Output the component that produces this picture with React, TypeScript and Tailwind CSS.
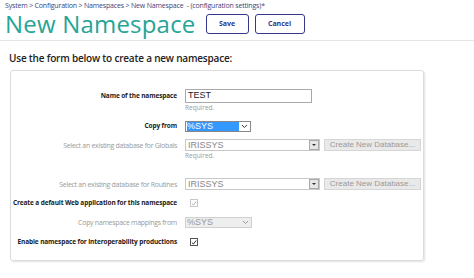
import React from "react";

const labelBold = "font-bold text-[#1a1a1a] text-[6.5px] tracking-[-0.12px]";
const labelDim = "text-[#9a9a9a] text-[7px] tracking-[-0.3px]";

function Row({ label, bold, className, children }: { label: string; bold?: boolean; className?: string; children?: React.ReactNode }) {
  return (
    <div className={`flex items-center ${className ?? ""}`}>
      <div className={`w-[166px] shrink-0 text-right whitespace-nowrap leading-none ${bold ? labelBold : labelDim}`}>{label}</div>
      <div className="ml-[8px] flex items-center">{children}</div>
    </div>
  );
}

function Check({ disabled }: { disabled?: boolean }) {
  return (
    <div className={`ml-[5px] w-[8px] h-[8px] border ${disabled ? "border-[#c8c8c8]" : "border-[#555]"} bg-white flex items-center justify-center`}>
      <svg width="7" height="7" viewBox="0 0 7 7">
        <path d="M1 3.5 L2.8 5.3 L6 1.2" fill="none" stroke={disabled ? "#aaa" : "#222"} strokeWidth="1.1" />
      </svg>
    </div>
  );
}

function Combo({ value }: { value: string }) {
  return (
    <div className="flex items-center gap-[4px]">
      <div className="flex items-center w-[135px] h-[12px] border border-[#c8c8c8] bg-white">
        <span className="flex-1 pl-[2px] text-[9px] leading-none text-[#888] font-['Liberation_Sans',sans-serif]">{value}</span>
        <div className="w-[10px] h-[10px] bg-[#e6e6e6] border border-[#aaa] flex items-center justify-center">
          <div className="w-0 h-0 border-l-[2px] border-r-[2px] border-t-[2px] border-l-transparent border-r-transparent border-t-[#333]" />
        </div>
      </div>
      <button className="w-[97px] h-[12px] bg-[#e9e9e9] border border-[#d6d6d6] text-[8px] leading-none text-[#9a9a9a] font-['Liberation_Sans',sans-serif]">
        Create New Database...
      </button>
    </div>
  );
}

export default function App() {
  return (
    <div className="w-[474px] h-[278px] bg-white font-['Open_Sans',sans-serif] overflow-hidden">
      <div className="px-[5px] pt-[1px]">
        <div className="h-[9px] text-[7px] leading-[9px] tracking-[-0.18px] text-[#3d3f7a] whitespace-nowrap">
          System &gt; Configuration &gt; Namespaces &gt; New Namespace&nbsp; - (configuration settings)*
        </div>
        <div className="flex items-center mt-[2px] h-[24px]">
          <h1 className="text-[24px] leading-[24px] text-[#25a497] tracking-[0.2px]">New Namespace</h1>
          <div className="flex gap-[6px] ml-[10px]">
            <button className="w-[43px] h-[20px] rounded-[3px] border-[1.5px] border-[#34378a] text-[7px] font-bold text-[#34378a]">Save</button>
            <button className="w-[50px] h-[20px] rounded-[3px] border-[1.5px] border-[#34378a] text-[7px] font-bold text-[#34378a]">Cancel</button>
          </div>
        </div>
      </div>
      <div className="mt-[4px] h-px bg-[#e4e4e4]" />
      <h2 className="ml-[9px] mt-[10px] text-[10px] leading-[14px] tracking-[-0.2px] font-semibold text-[#222]">Use the form below to create a new namespace:</h2>
      <div className="ml-[10px] mt-[5px] w-[414px] rounded-[3px] border border-[#dcdcdc] shadow-[1px_1px_2px_rgba(0,0,0,0.12)] pt-[18px] pb-[12px]">
        <Row label="Name of the namespace" bold className="h-[14px]">
          <div className="w-[127px] h-[14px] border border-[#aaa] bg-white flex items-center pl-[2px] text-[9px] text-[#222] font-['Liberation_Sans',sans-serif]">TEST</div>
        </Row>
        <Row label="" className="h-[10px]">
          <span className="text-[6.5px] text-[#9a9a9a]">Required.</span>
        </Row>
        <Row label="Copy from" bold className="h-[12px] mt-[7px]">
          <div className="flex items-center w-[66px] h-[11px] border border-[#888] bg-white">
            <span className="w-[53px] h-[9px] ml-[1px] bg-[#3399ff] text-white text-[9px] leading-[9px] font-['Liberation_Sans',sans-serif]">%SYS</span>
            <svg width="11" height="9" viewBox="0 0 11 9">
              <path d="M3 3 L5.5 5.5 L8 3" fill="none" stroke="#333" strokeWidth="1" />
            </svg>
          </div>
        </Row>
        <Row label="Select an existing database for Globals" className="h-[12px] mt-[7px]">
          <Combo value="IRISSYS" />
        </Row>
        <Row label="" className="h-[9px]">
          <span className="text-[6.5px] text-[#9a9a9a]">Required.</span>
        </Row>
        <Row label="Select an existing database for Routines" className="h-[12px] mt-[18px]">
          <Combo value="IRISSYS" />
        </Row>
        <Row label="Create a default Web application for this namespace" bold className="h-[12px] mt-[7px]">
          <Check disabled />
        </Row>
        <Row label="Copy namespace mappings from" className="h-[12px] mt-[7px]">
          <div className="flex items-center w-[67px] h-[11px] border border-[#d0d0d0] bg-[#eeeeee]">
            <span className="flex-1 pl-[1px] text-[9px] leading-none text-[#999] font-['Liberation_Sans',sans-serif]">%SYS</span>
            <svg width="11" height="9" viewBox="0 0 11 9">
              <path d="M3 3 L5.5 5.5 L8 3" fill="none" stroke="#999" strokeWidth="1" />
            </svg>
          </div>
        </Row>
        <Row label="Enable namespace for interoperability productions" bold className="h-[12px] mt-[8px]">
          <Check />
        </Row>
      </div>
    </div>
  );
}
